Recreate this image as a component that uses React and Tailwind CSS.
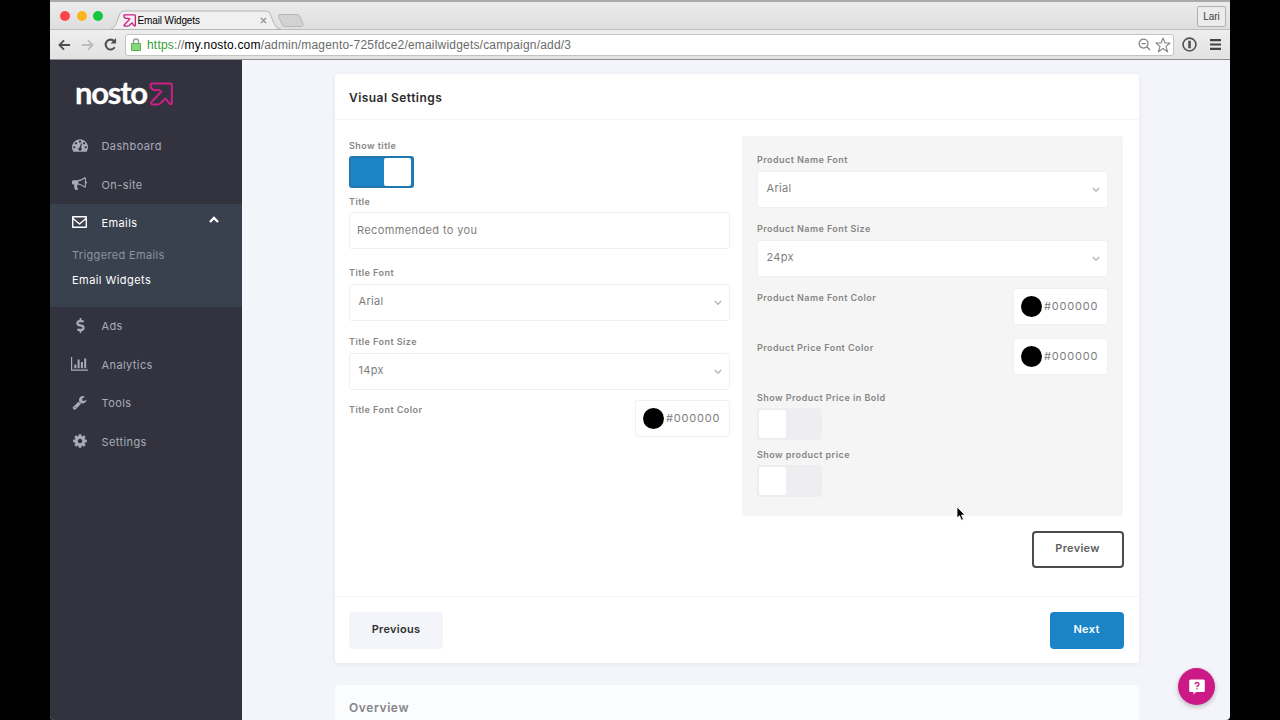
import { FaDollarSign } from 'react-icons/fa'

const paths = {
	dashboard: 'M384 1152q0-53-37.5-90.5t-90.5-37.5-90.5 37.5-37.5 90.5 37.5 90.5 90.5 37.5 90.5-37.5 37.5-90.5zm192-448q0-53-37.5-90.5t-90.5-37.5-90.5 37.5-37.5 90.5 37.5 90.5 90.5 37.5 90.5-37.5 37.5-90.5zm428 481l101-382q6-26-7.5-48.5t-38.5-29.5-48 6.5-30 39.5l-101 382q-60 5-107 43.5t-63 98.5q-20 77 20 146t117 89 146-20 89-117q16-60-6-117t-72-91zm660-33q0-53-37.5-90.5t-90.5-37.5-90.5 37.5-37.5 90.5 37.5 90.5 90.5 37.5 90.5-37.5 37.5-90.5zm-640-640q0-53-37.5-90.5t-90.5-37.5-90.5 37.5-37.5 90.5 37.5 90.5 90.5 37.5 90.5-37.5 37.5-90.5zm448 192q0-53-37.5-90.5t-90.5-37.5-90.5 37.5-37.5 90.5 37.5 90.5 90.5 37.5 90.5-37.5 37.5-90.5zm320 448q0 261-141 483-19 29-54 29h-1402q-35 0-54-29-141-221-141-483 0-182 71-348t191-286 286-191 348-71 348 71 286 191 191 286 71 348z',
	bullhorn: 'M1664 640q53 0 90.5 37.5t37.5 90.5-37.5 90.5-90.5 37.5v384q0 52-38 90t-90 38q-417-347-812-380-58 19-91 66t-31 100.5 40 92.5q-20 33-23 65.5t6 58 33.5 55 48 50 61.5 50.5q-29 58-111.5 83t-168.5 11.5-132-55.5q-7-23-29.5-87.5t-32-94.5-23-89-15-101 3.5-98.5 22-110.5h-122q-66 0-113-47t-47-113v-192q0-66 47-113t113-47h480q435 0 896-384 52 0 90 38t38 90v384zm-128 604v-954q-394 302-768 343v270q377 42 768 341z',
	wrench: 'M448 1472q0-26-19-45t-45-19-45 19-19 45 19 45 45 19 45-19 19-45zm644-420l-682 682q-37 37-90 37-52 0-91-37l-106-108q-38-36-38-90 0-53 38-91l681-681q39 98 114.5 173.5t173.5 114.5zm634-435q0 39-23 106-47 134-164.5 217.5t-258.5 83.5q-185 0-316.5-131.5t-131.5-316.5 131.5-316.5 316.5-131.5q58 0 121.5 16.5t107.5 46.5q16 11 16 28t-16 28l-293 169v224l193 107q5-3 79-48.5t135.5-81 70.5-35.5q15 0 23.5 10t8.5 25z',
	cog: 'M1152 896q0-106-75-181t-181-75-181 75-75 181 75 181 181 75 181-75 75-181zm512-109v222q0 12-8 23t-20 13l-185 28q-19 54-39 91 35 50 107 138 10 12 10 25t-9 23q-27 37-99 108t-94 71q-12 0-26-9l-138-108q-44 23-91 38-16 136-29 186-7 28-36 28h-222q-14 0-24.5-8.5t-11.5-21.5l-28-184q-49-16-90-37l-141 107q-10 9-25 9-14 0-25-11-126-114-165-168-7-10-7-23 0-12 8-23 15-21 51-66.5t54-70.5q-27-50-41-99l-183-27q-13-2-21-12.5t-8-23.5v-222q0-12 8-23t19-13l186-28q14-46 39-92-40-57-107-138-10-12-10-24 0-10 9-23 26-36 98.5-107.5t94.5-71.5q13 0 26 10l138 107q44-23 91-38 16-136 29-186 7-28 36-28h222q14 0 24.5 8.5t11.5 21.5l28 184q49 16 90 37l142-107q9-9 24-9 13 0 25 10 129 119 165 170 7 8 7 22 0 12-8 23-15 21-51 66.5t-54 70.5q26 50 41 98l183 28q13 2 21 12.5t8 23.5z',
}

function Glyph({ name, className }) {
	return (
		<svg viewBox="0 0 1792 1792" fill="currentColor" className={className}>
			<path d={paths[name]} />
		</svg>
	)
}

function Chevron({ up, className, strokeWidth }) {
	return (
		<svg viewBox="0 0 10 7" fill="none" stroke="currentColor" strokeWidth={strokeWidth} className={className}>
			<path d={up ? 'M1 6L5 2L9 6' : 'M1 1L5 5L9 1'} />
		</svg>
	)
}

function NostoArrow({ className, strokeWidth }) {
	return (
		<svg viewBox="0 0 24 24" fill="none" stroke="#cd1e87" strokeWidth={strokeWidth} strokeLinejoin="round" strokeLinecap="round" className={className}>
			<path d="M3 1.500H21Q22.800 1.500 22.800 3.300V21Q22.500 23 20.500 21.500L16.500 16.500L11.500 21.300Q10 22.500 8.500 22.500H3.500Q1.200 22 2.500 20L12.500 9.500L10 8H4.500Q1.500 6.500 1.500 3Q1.500 1.500 3 1.500Z" />
		</svg>
	)
}

function Browser() {
	return (
		<div className="h-15 w-full shrink-0 border-t-2 border-[#a9a9a9] bg-[#e6e6e6] font-['Liberation_Sans'] text-black">
			<div className="flex h-[27px] bg-linear-to-b from-[#ececec] to-[#dedede]">
				<div className="flex w-[61px] items-center gap-[6.500px] pl-[10px] pt-px">
					<span className="size-[10px] rounded-full bg-[#fb4548]" />
					<span className="size-[10px] rounded-full bg-[#fcb41f]" />
					<span className="size-[10px] rounded-full bg-[#16c740]" />
				</div>
				<div className="relative h-full w-[170px]">
					<svg viewBox="0 0 170 27" className="absolute inset-0 h-[28px] w-[170px]">
						<path d="M-2 27C3 26 4 24 6 19L9 11Q10 8.500 13 8.500H155Q158 8.500 159 11L163 21Q165 26 170 27Z" fill="#f0f0f0" stroke="#b5b5b5" />
					</svg>
					<div className="relative flex h-full items-center pl-3 pt-[10px]">
						<NostoArrow className="size-[13px]" strokeWidth={2.5} />
						<span className="ml-[1.500px] w-[122px] text-[10px] tracking-[-0.120px]">Email Widgets</span>
						<svg viewBox="0 0 8 8" className="size-[7px]" stroke="#8c8c8c" strokeWidth="1.500">
							<path d="M1 1L7 7M7 1L1 7" />
						</svg>
					</div>
				</div>
				<svg viewBox="0 0 28 27" className="-ml-1 h-[27px] w-7">
					<path d="M3 12.500H20Q22 12.500 23 14.500L26 22Q26.500 24.500 24.500 24.500H8Q6 24.500 5 22L1.500 14.500Q1 12.500 3 12.500Z" fill="#d2d2d2" stroke="#b7b7b7" />
				</svg>
				<div className="grow" />
				<div className="mr-1 mt-[4px] flex h-[21px] w-[29px] items-center justify-center rounded-[2px] border border-[#b0b0b0] bg-[#ececec] text-[10px] text-[#3d3d3d]">Lari</div>
			</div>
			<div className="flex h-[31px] items-center border-t border-b border-t-[#bdbdbd] border-b-[#8d8d8d] bg-linear-to-b from-[#eeeeee] to-[#e2e2e2] pl-2">
				<svg viewBox="0 0 14 12" className="h-3 w-[13px]" fill="none" stroke="#505050" strokeWidth="2">
					<path d="M13 6H2M6.500 1L1.500 6L6.500 11" />
				</svg>
				<svg viewBox="0 0 14 12" className="ml-[10px] h-3 w-[13px]" fill="none" stroke="#bcbcbc" strokeWidth="2">
					<path d="M1 6H12M7.500 1L12.500 6L7.500 11" />
				</svg>
				<svg viewBox="0 0 14 14" className="ml-[10px] size-[13px]" fill="none" stroke="#505050" strokeWidth="2.200">
					<path d="M11.500 10A5.300 5.300 0 1 1 11 3.500" />
					<path d="M13 0V6H7Z" fill="#505050" stroke="none" />
				</svg>
				<div className="ml-[8px] flex h-[22px] w-[1049px] items-center rounded-[3px] border border-[#c3c3c3] bg-white pl-[5px]">
					<svg viewBox="0 0 10 13" className="h-[13px] w-[10px]">
						<path d="M2.500 6V3.500Q2.500 1 5 1T7.500 3.500V6" fill="none" stroke="#9a9f9a" strokeWidth="1.500" />
						<path d="M0.500 5.500H9.500V12.500H0.500Z" fill="#86d67c" stroke="#5eb455" />
					</svg>
					<div className="ml-[6px] grow pt-px text-[12px] tracking-[0.190px] text-[#6b6b6b]">
						<span className="text-[#35a035]">https</span>://<span className="text-black">my.nosto.com</span>/admin/magento-725fdce2/emailwidgets/campaign/add/3
					</div>
					<svg viewBox="0 0 14 14" className="size-[13px]" fill="none" stroke="#858585" strokeWidth="1.400">
						<circle cx="6" cy="6" r="4.800" />
						<path d="M9.500 9.500L13 13M3.700 6H8.300" />
					</svg>
					<svg viewBox="0 0 16 16" className="ml-1 mr-[2px] size-4" fill="none" stroke="#858585" strokeWidth="1.100" strokeLinejoin="round">
						<path d="M8 1L10 6H15L11 9.300L12.600 14.800L8 11.500L3.400 14.800L5 9.300L1 6H6Z" />
					</svg>
				</div>
				<svg viewBox="0 0 14 14" className="ml-2 size-[15px]" fill="none" stroke="#505050">
					<circle cx="7" cy="7" r="6" strokeWidth="1.500" />
					<path d="M7 3.500V10.500" strokeWidth="2.400" />
				</svg>
				<svg viewBox="0 0 11 11" className="ml-[13px] size-[11px]" stroke="#444" strokeWidth="2.200">
					<path d="M0 1.200H11M0 5.500H11M0 9.800H11" />
				</svg>
			</div>
		</div>
	)
}

function NavItem({ icon, label, active, children }) {
	return (
		<div className={active ? 'flex h-[38.500px] items-center pl-[22px] text-white' : 'flex h-[38.500px] items-center pl-[22px] text-[#a9acb8]'}>
			<span className="flex w-[29.500px] items-center pb-[2px]">{icon}</span>
			<span className="grow text-[11px] tracking-[0.400px]">{label}</span>
			{children}
		</div>
	)
}

function Sidebar() {
	return (
		<div className="w-[191.500px] shrink-0 bg-[#32333f]">
			<div className="flex h-[67px] items-start pl-[25px] pt-[20px]">
				<span className="w-[73.500px] font-['Lato'] text-[31px] font-bold leading-[25px] tracking-[-1.250px] text-white [-webkit-text-stroke:0.3px_white]">nosto</span>
				<NostoArrow className="mt-[1.500px] size-6" strokeWidth={2} />
			</div>
			<NavItem icon={<Glyph name="dashboard" className="size-4" />} label="Dashboard" />
			<NavItem icon={<Glyph name="bullhorn" className="size-[15px]" />} label="On-site" />
			<div className="h-[103px] bg-[#3a414e]">
				<NavItem
					active
					icon={
						<svg viewBox="0 0 15 12" className="h-3 w-[15px]" fill="none" stroke="currentColor" strokeWidth="1.400">
							<path d="M0.700 0.700H14.300V11.300H0.700ZM1 2.500L7.500 8L14 2.500" strokeLinejoin="round" />
						</svg>
					}
					label="Emails"
				>
					<Chevron up className="mb-[7px] mr-[23px] h-[7px] w-[10px]" strokeWidth={2.4} />
				</NavItem>
				<div className="flex h-[25px] items-center pl-[22px] text-[11px] tracking-[0.340px] text-[#8e929f]">Triggered Emails</div>
				<div className="flex h-[26px] items-center pl-[22px] text-[11px] tracking-[0.440px] text-white">Email Widgets</div>
			</div>
			<NavItem icon={<FaDollarSign className="ml-px size-[15px]" />} label="Ads" />
			<NavItem
				icon={
					<svg viewBox="0 0 17 14" className="-ml-px h-[14px] w-[17px]" fill="currentColor">
						<path d="M0 0H1.200V12.600H17V13.800H0ZM3.300 7.500H5.300V11.300H3.300ZM6.600 2.500H8.600V11.300H6.600ZM9.900 5H11.900V11.300H9.900ZM13.200 1.500H15.200V11.300H13.200Z" />
					</svg>
				}
				label="Analytics"
			/>
			<NavItem icon={<Glyph name="wrench" className="size-[15px]" />} label="Tools" />
			<NavItem icon={<Glyph name="cog" className="size-4" />} label="Settings" />
		</div>
	)
}

function Label({ children }) {
	return <div className="h-[11px] whitespace-nowrap text-[9px] font-semibold leading-[11px] tracking-[0.440px] text-[#868686]">{children}</div>
}

function Select({ label, value }) {
	return (
		<div className="flex h-[69px] flex-col gap-[6px]">
			<Label>{label}</Label>
			<div className="flex h-[37px] items-center justify-between rounded-[3px] border border-[#f0f0f0] bg-white pl-[8.500px] pr-[7px] text-[11px] tracking-[0.300px] text-[#7d7d7d]">
				<span className="pb-[2px]">{value}</span>
				<Chevron className="mt-px h-[6px] w-[8px] text-[#bababa]" strokeWidth={2} />
			</div>
		</div>
	)
}

function ColorField({ label }) {
	return (
		<div className="flex h-[50px] items-start justify-between">
			<div className="pt-[4px]">
				<Label>{label}</Label>
			</div>
			<div className="flex h-[37px] w-[95.500px] items-center rounded-[3px] border border-[#f0f0f0] bg-white pl-[7px] text-[11px] tracking-[0.800px] text-[#7d7d7d]">
				<span className="mr-[2.500px] size-[21px] rounded-full bg-black" />
				#000000
			</div>
		</div>
	)
}

function Toggle({ label, on }) {
	return (
		<div className="flex h-[56.500px] flex-col gap-[5px]">
			<Label>{label}</Label>
			{on ? (
				<div className="flex h-8 w-[65px] justify-end rounded-[3px] border-2 border-[#2277ae] bg-[#1a84c7] pr-px">
					<span className="h-7 w-[27px] rounded-[2px] bg-white" />
				</div>
			) : (
				<div className="flex h-8 w-[65px] rounded-[3px] bg-[#eeeef0] p-[2px]">
					<span className="h-7 w-[27px] rounded-[2px] bg-white" />
				</div>
			)}
		</div>
	)
}

function VisualSettings() {
	return (
		<div className="h-[589px] shrink-0 rounded-[3px] bg-white shadow-[0_1px_5px_rgba(60,60,100,0.080)]">
			<div className="flex h-[46px] items-center border-b border-[#f4f4f6] px-[14.500px] pt-[2px] text-[12px] font-semibold tracking-[0.450px] text-[#2b2b2b]">Visual Settings</div>
			<div className="flex h-[411px] gap-3 px-[14.500px] pt-4">
				<div className="w-[381px] pt-1">
					<Toggle label="Show title" on />
					<div className="-mt-px flex h-[71px] flex-col gap-[5px]">
						<Label>Title</Label>
						<div className="flex h-[37px] items-center rounded-[3px] border border-[#f0f0f0] pl-[7px] pt-px text-[11px] tracking-[0.380px] text-[#7d7d7d]">Recommended to you</div>
					</div>
					<Select label="Title Font" value="Arial" />
					<Select label="Title Font Size" value="14px" />
					<div className="-mt-[4.500px]">
						<ColorField label="Title Font Color" />
					</div>
				</div>
				<div className="h-[380px] w-[381px] rounded-[3px] bg-[#f5f5f5] px-[15px] pt-[18px]">
					<Select label="Product Name Font" value="Arial" />
					<Select label="Product Name Font Size" value="24px" />
					<div className="-mt-[4px]">
						<ColorField label="Product Name Font Color" />
						<ColorField label="Product Price Font Color" />
					</div>
					<div className="pt-[4px]">
						<Toggle label="Show Product Price in Bold" />
						<Toggle label="Show product price" />
					</div>
				</div>
			</div>
			<div className="flex h-[65px] justify-end pr-[15px]">
				<div className="flex h-[37px] w-[92px] items-center justify-center rounded-[4px] border-2 border-[#4b4b4b] pb-[2px] text-[11px] font-semibold tracking-[0.300px] text-[#606060]">Preview</div>
			</div>
			<div className="flex justify-between border-t border-[#f4f4f6] pl-[14.500px] pr-[15px] pt-[15px] text-[11px] font-semibold tracking-[0.300px]">
				<div className="flex h-[37px] w-[94px] items-center justify-center rounded-[4px] bg-[#f4f5fa] pb-[2px] text-[#303030]">Previous</div>
				<div className="flex h-[37px] w-[74px] items-center justify-center rounded-[4px] bg-[#1a84c7] pb-[2px] text-white">Next</div>
			</div>
		</div>
	)
}

export default function App() {
	return (
		<div className="flex h-screen justify-center overflow-hidden bg-black">
			<div className="relative flex h-full w-[1180px] flex-col overflow-hidden rounded-b-[4px] bg-[#f4f5fa] font-['Inter']">
				<Browser />
				<div className="flex min-h-0 grow">
					<Sidebar />
					<div className="flex grow flex-col gap-[22px] overflow-hidden pl-[93px] pr-[91.500px] pt-[14px]">
						<VisualSettings />
						<div className="h-[60px] shrink-0 rounded-[3px] bg-[#fbfcfe] px-[14.500px] pt-[15px] text-[12px] font-semibold leading-4 tracking-[0.600px] text-[#858589]">Overview</div>
					</div>
				</div>
				<div className="absolute left-[1128px] top-[668px] flex size-[37px] items-center justify-center rounded-full bg-[#cb1985] shadow-[0_2px_5px_rgba(0,0,0,0.250)]">
					<svg viewBox="0 0 16 16" className="size-4" fill="white">
						<path d="M1.500 0.500H14.500Q15.800 0.500 15.800 2V11.500Q15.800 13 14.500 13H7L4.500 15.500V13H1.500Q0.200 13 0.200 11.500V2Q0.200 0.500 1.500 0.500Z" />
						<path d="M6 5.200Q6.200 3.500 8 3.500T10 5.200Q10 6.300 8 7.300V8.300M8 9.300V10.500" fill="none" stroke="#cb1985" strokeWidth="1.300" />
					</svg>
				</div>
				<svg viewBox="0 0 10 16" className="absolute left-[906px] top-[506px] h-4 w-[10px]">
					<path d="M1 1V12L3.500 9.700L5.400 14.300L7.400 13.400L5.500 9H9Z" fill="black" stroke="white" strokeWidth="0.800" />
				</svg>
			</div>
		</div>
	)
}
